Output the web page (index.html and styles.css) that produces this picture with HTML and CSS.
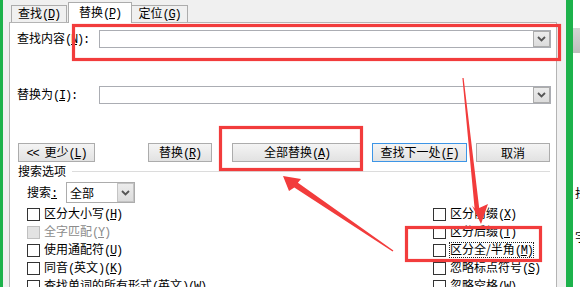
FILE: index.html
```html
<!DOCTYPE html>
<html>
<head>
	<link rel="stylesheet" href="styles.css">
</head>
<body>
	<div class="stripe"></div>
	<div class="dialog">
		<div class="tabs">
			<div class="tab t1"><span>查找<span class="acc">(<u>D</u>)</span></span></div>
			<div class="tab t2 on"><span>替换<span class="acc">(<u>P</u>)</span></span></div>
			<div class="tab t3"><span>定位<span class="acc">(<u>G</u>)</span></span></div>
		</div>
		<div class="panel">
			<div class="field find">
				<label>查找内容<span class="acc">(<u>N</u>):</span></label>
				<div class="combo"><span class="drop"><svg width="9" height="6" viewBox="0 0 9 6"><polyline points="1,1 4.5,4.5 8,1" fill="none" stroke="#555" stroke-width="1.8"/></svg></span></div>
			</div>
			<div class="field repl">
				<label>替换为<span class="acc">(<u>I</u>):</span></label>
				<div class="combo"><span class="drop"><svg width="9" height="6" viewBox="0 0 9 6"><polyline points="1,1 4.5,4.5 8,1" fill="none" stroke="#555" stroke-width="1.8"/></svg></span></div>
			</div>
			<div class="buttons">
				<div class="btn b-less"><span><span class="acc">&lt;&lt;&nbsp;</span>更少<span class="acc">(<u>L</u>)</span></span></div>
				<div class="btn b-rep"><span>替换<span class="acc">(<u>R</u>)</span></span></div>
				<div class="btn b-all"><span>全部替换<span class="acc">(<u>A</u>)</span></span></div>
				<div class="btn b-next"><span>查找下一处<span class="acc">(<u>F</u>)</span></span></div>
				<div class="btn b-cancel"><span>取消</span></div>
			</div>
			<div class="group-head">
				<span>搜索选项</span>
				<div class="rule"></div>
			</div>
			<div class="search-row">
				<label>搜索<span class="acc"><u>:</u></span></label>
				<div class="select">
					<span>全部</span>
					<span class="drop"><svg width="9" height="6" viewBox="0 0 9 6"><polyline points="1,1 4.5,4.5 8,1" fill="none" stroke="#555" stroke-width="1.8"/></svg></span>
				</div>
			</div>
			<div class="options">
				<div class="col left">
					<div class="check"><span class="box"></span><span>区分大小写<span class="acc">(<u>H</u>)</span></span></div>
					<div class="check off"><span class="box"></span><span>全字匹配<span class="acc">(<u>Y</u>)</span></span></div>
					<div class="check"><span class="box"></span><span>使用通配符<span class="acc">(<u>U</u>)</span></span></div>
					<div class="check"><span class="box"></span><span>同音<span class="acc">(</span>英文<span class="acc">)(<u>K</u>)</span></span></div>
					<div class="check"><span class="box"></span><span>查找单词的所有形式<span class="acc">(</span>英文<span class="acc">)(<u>W</u>)</span></span></div>
				</div>
				<div class="col right">
					<div class="check"><span class="box"></span><span>区分前缀<span class="acc">(<u>X</u>)</span></span></div>
					<div class="check"><span class="box"></span><span>区分后缀<span class="acc">(<u>T</u>)</span></span></div>
					<div class="check"><span class="box"></span><span class="focus">区分全/半角<span class="acc">(<u>M</u>)</span></span></div>
					<div class="check"><span class="box"></span><span>忽略标点符号<span class="acc">(<u>S</u>)</span></span></div>
					<div class="check"><span class="box"></span><span>忽略空格<span class="acc">(<u>W</u>)</span></span></div>
				</div>
			</div>
		</div>
	</div>
	<div class="green"></div>
	<div class="sliver">
		<div class="scroll"></div>
		<div class="peek first">找</div>
		<div class="peek">字</div>
	</div>

	<svg class="marks" width="580" height="287" viewBox="0 0 580 287">
		<rect x="73.5" y="25.5" width="486" height="34"/>
		<rect x="220.5" y="127.5" width="141" height="42"/>
		<rect x="406.5" y="227.5" width="134" height="33"/>
		<polygon class="arrow" points="463.6,78 479.2,208 488,204 481,224 472,205.5 474.6,208.6 462.4,78"/>
		<polygon class="arrow" points="283,176 301,179 297.9,182.8 393.4,250.5 392.6,251.5 294.3,187.6 289,191"/>
	</svg>
</body>
</html>
```

FILE: styles.css
```css
html, body {
	margin: 0;
	padding: 0;
}
body {
	position: relative;
	display: flex;
	width: 580px;
	height: 287px;
	overflow: hidden;
	background-color: #fff;
	color: #000;
	font-family: "Noto Sans CJK SC", sans-serif;
	font-size: 12px;
	line-height: 14px;
}
.acc {
	font-family: "Liberation Mono", monospace;
	letter-spacing: -1.2px;
}
.stripe, .green {
	background-color: #1db24b;
}
.stripe {
	width: 3px;
}
.green {
	width: 7px;
}
.dialog {
	width: 548px;
	padding: 0 9px 0 6px;
	background-color: #f0f0f0;
}

/* tabs */
.tabs {
	display: flex;
	align-items: flex-end;
	height: 22px;
	padding-left: 2px;
}
.tab {
	display: flex;
	align-items: center;
	justify-content: center;
	height: 16px;
	border: 1px solid #acacac;
	border-bottom: 0;
	background-color: #f0f0f0;
}
.t1 {
	width: 54px;
}
.t2 {
	width: 62px;
	margin-left: 1px;
}
.t3 {
	width: 55px;
	margin-left: -1px;
}
.tab.on {
	position: relative;
	z-index: 1;
	height: 20px;
	margin-bottom: -1px;
	background-color: #fff;
}

/* panel */
.panel {
	height: 300px;
	border: 1px solid #b4b4b4;
	background-color: #fff;
}
.field {
	display: flex;
	align-items: center;
	height: 18px;
	padding-left: 7px;
}
.field label {
	width: 82px;
}
.find {
	margin-top: 7px;
}
.repl {
	margin-top: 38px;
}
.combo {
	display: flex;
	justify-content: flex-end;
	width: 450px;
	height: 16px;
	border: 1px solid #abadb3;
	padding: 0;
}
.drop {
	display: flex;
	align-items: center;
	justify-content: center;
	width: 15px;
	height: 14px;
	margin: 0;
	border: 1px solid #acacac;
	background: linear-gradient(#ececec, #dcdcdc);
}

/* buttons */
.buttons {
	display: flex;
	margin-top: 39px;
	padding-left: 8px;
	height: 19px;
}
.btn {
	display: flex;
	align-items: center;
	justify-content: center;
	height: 17px;
	border: 1px solid #acacac;
	background: linear-gradient(#f4f4f4, #e2e2e2);
	white-space: nowrap;
}
.b-less {
	width: 75px;
}
.b-rep {
	width: 62px;
	margin-left: 53px;
}
.b-all {
	width: 128px;
	margin-left: 20px;
}
.b-next {
	width: 93px;
	margin-left: 10px;
	border-color: #3d95e6;
}
.b-cancel {
	width: 72px;
	margin-left: 9px;
}

/* options */
.group-head {
	display: flex;
	align-items: center;
	gap: 6px;
	height: 14px;
	margin-top: 2px;
	padding: 0 6px 0 8px;
}
.rule {
	flex: 1;
	height: 1px;
	background-color: #dcdcdc;
}
.search-row {
	display: flex;
	align-items: center;
	height: 21px;
	margin-top: 4px;
	padding-left: 17px;
}
.search-row label {
	width: 39px;
}
.select {
	display: flex;
	align-items: center;
	justify-content: space-between;
	width: 64px;
	height: 19px;
	padding-left: 3px;
	border: 1px solid #acacac;
}
.select .drop {
	height: 17px;
	border-color: #c4c4c4;
}
.options {
	display: flex;
	margin-top: 2px;
	padding-left: 17px;
}
.col.left {
	width: 406px;
}
.check {
	display: flex;
	align-items: center;
	gap: 4px;
	height: 18px;
	white-space: nowrap;
}
.box {
	width: 11px;
	height: 11px;
	border: 1px solid #333;
	background-color: #fff;
}
.check.off {
	color: #8c8c8c;
}
.check.off .box {
	border-color: #c0c0c0;
	background-color: #e3e3e3;
}
.focus {
	line-height: 11px;
	outline: 1px dotted #222;
}

/* right edge */
.sliver {
	flex: 1;
	overflow: hidden;
	background-color: #fff;
	padding-left: 2px;
	white-space: nowrap;
}
.scroll {
	height: 25px;
	margin: 28px 0 0 -2px;
	background: linear-gradient(#d6d6d6, #bfbfbf);
}
.peek.first {
	margin-top: 133px;
}
.peek {
	margin-top: 30px;
}

/* annotations */
.marks {
	position: absolute;
	top: 0;
	left: 0;
	pointer-events: none;
}
.marks rect {
	fill: none;
	stroke: #f23c3c;
	stroke-width: 3.2;
}
.marks .arrow {
	fill: #f23c3c;
}
```
